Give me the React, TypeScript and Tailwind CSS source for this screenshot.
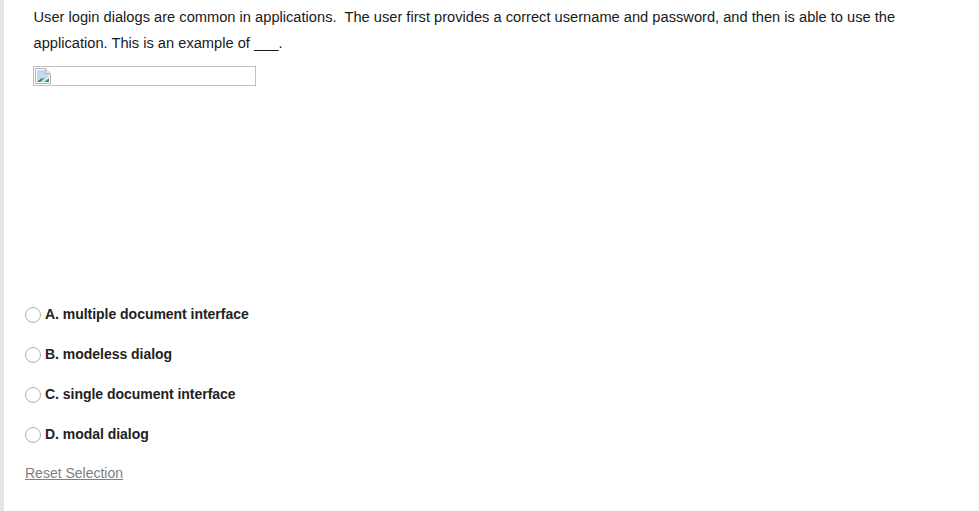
import React from 'react';

const options = [
    'A. multiple document interface',
    'B. modeless dialog',
    'C. single document interface',
    'D. modal dialog',
];

const BrokenImage = () => (
    <svg width="16" height="16" viewBox="0 0 16 16" className="ml-px mt-px block">
        <path d="M0.5 0.5H10.5L15.5 5.5V15.5H0.5Z" fill="#fff" stroke="#b4b4b4" />
        <path d="M2 2H10V6H14V8.5L8 14H2Z" fill="#c6d8f0" />
        <path d="M2 14L6 10.5L9.5 10L5.5 14Z" fill="#2f9e3c" />
        <path d="M9 14L14 10V14Z" fill="#2f9e3c" />
        <path d="M10.5 0.5V5.5H15.5" fill="#ececec" stroke="#b4b4b4" />
    </svg>
);

export default function App() {
    return (
        <div className="h-[511px] w-[979px] overflow-hidden bg-white border-l-4 border-[#e5e5e5] font-['Liberation_Sans',Arial,sans-serif]">
            <div className="pl-[21px] pt-1">
                <div className="pl-2 w-[880px] text-[14.67px] leading-[26px] text-[#1a1a1a]">
                    <p className="pl-[0.5px]">
                        User login dialogs are common in applications.&nbsp; The user first provides a correct username and password, and then is able to use the application. This is an example of ___.
                    </p>
                    <div className="mt-[10px] h-5 w-[223px] border border-[#c0c0c0]">
                        <BrokenImage />
                    </div>
                </div>
                <div className="mt-[218px] flex flex-col gap-[20px]">
                    {options.map((o) => (
                        <label key={o} className="flex h-5 items-center">
                            <span className="mt-[2px] h-4 w-4 rounded-full border border-[#b0b0b0] bg-white" />
                            <span className="ml-1 text-[14px] font-bold tracking-[-0.03px] text-[#222222]">{o}</span>
                        </label>
                    ))}
                </div>
                <a className="mt-[19px] block text-[14px] leading-[20px] text-[#808080] underline">Reset Selection</a>
            </div>
        </div>
    );
}
